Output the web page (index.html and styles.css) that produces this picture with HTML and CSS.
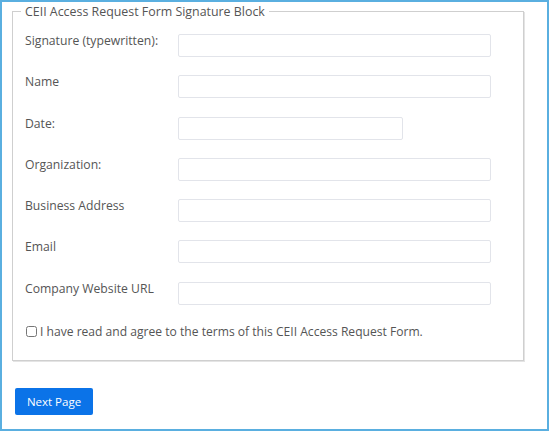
FILE: index.html
```html
<!DOCTYPE html>
<html lang="en">

<head>
    <meta charset="UTF-8">
    <meta name="viewport" content="width=device-width, initial-scale=1.0">
    <title>CEII Access Request Form</title>
    <link rel="stylesheet" href="styles.css">
</head>

<body>
    <div class="frame">
        <fieldset class="sig-block">
            <legend>CEII Access Request Form Signature Block</legend>
            <div class="form-row">
                <label for="sig">Signature (typewritten):</label>
                <input type="text" id="sig" class="field">
            </div>
            <div class="form-row">
                <label for="name">Name</label>
                <input type="text" id="name" class="field">
            </div>
            <div class="form-row">
                <label for="date">Date:</label>
                <input type="text" id="date" class="field field-short">
            </div>
            <div class="form-row">
                <label for="org">Organization:</label>
                <input type="text" id="org" class="field">
            </div>
            <div class="form-row">
                <label for="addr">Business Address</label>
                <input type="text" id="addr" class="field">
            </div>
            <div class="form-row">
                <label for="email">Email</label>
                <input type="text" id="email" class="field">
            </div>
            <div class="form-row">
                <label for="url">Company Website URL</label>
                <input type="text" id="url" class="field">
            </div>
            <div class="agree">
                <input type="checkbox" id="agree">
                <label for="agree">I have read and agree to the terms of this CEII Access Request Form.</label>
            </div>
        </fieldset>
        <button class="btn-next" type="button">Next Page</button>
    </div>
</body>

</html>
```

FILE: styles.css
```css
body {
    margin: 0;
    font-family: "Open Sans", "DejaVu Sans", sans-serif;
    color: #555;
}
.frame {
    width: 549px;
    height: 431px;
    box-sizing: border-box;
    border: 2px solid #5aafe0;
    padding: 1px 23px 0 10px;
}
.sig-block {
    margin: 0;
    padding: 11px 13px 20px 12px;
    border: 1px solid #cfcfcf;
    box-shadow: 1px 1px 0 #e4e4e4;
}
.sig-block legend {
    font-size: 12.4px;
    padding: 0 4px;
    margin-left: -4px;
    line-height: 17px;
}
.form-row {
    display: flex;
    align-items: flex-start;
    height: 41.3px;
}
.form-row label {
    width: 153px;
    font-size: 12.2px;
    line-height: 17px;
    padding-top: 1px;
}
.field {
    width: 313px;
    height: 23px;
    box-sizing: border-box;
    margin: 3px 0 0 0;
    border: 1px solid #e2e4ea;
    border-radius: 2px;
    background: #fff;
}
.field-short {
    width: 225px;
}
.agree {
    display: flex;
    align-items: center;
    font-size: 12.1px;
    padding-top: 3px;
}
.agree input {
    margin: 0 3px 0 1px;
    width: 11px;
    height: 11px;
}
.btn-next {
    display: block;
    margin: 27px 0 0 3px;
    width: 78px;
    height: 27px;
    border: none;
    border-radius: 2px;
    background: #0b73e8;
    color: #fff;
    font-family: inherit;
    font-size: 11.5px;
}
```
